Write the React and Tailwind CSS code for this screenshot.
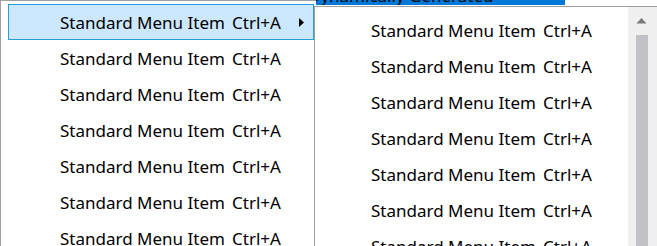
import React from 'react';

const ITEMS = Array.from({ length: 7 }, (_, i) => i);

function MenuRow({ highlighted, arrow }) {
  return (
    <div
      className={`flex h-[36px] w-[306px] items-center border pl-[51px] ${
        highlighted ? 'border-[#26a0da] bg-[#cce8ff]' : 'border-transparent'
      }`}
    >
      <span className="w-[172px] shrink-0 whitespace-nowrap">Standard Menu Item</span>
      <span className="w-[67px] shrink-0 whitespace-nowrap">Ctrl+A</span>
      {arrow && (
        <svg width="5" height="9" viewBox="0 0 5 9" className="mt-[1px]">
          <path d="M0 0 L5 4.5 L0 9 Z" fill="#000" />
        </svg>
      )}
    </div>
  );
}

export default function App() {
  return (
    <div className="relative h-[246px] w-[657px] overflow-hidden bg-white text-[17px] leading-none text-black font-['Noto_Sans',sans-serif]">
      {/* parent menu */}
      <div className="h-[260px] w-[316px] border-l border-t border-[#a0a0a0] pl-[7px] pt-[3px]">
        {ITEMS.map((i) => (
          <MenuRow key={i} highlighted={i === 0} arrow={i === 0} />
        ))}
      </div>

      {/* selected item of the control behind, clipped at the top */}
      <div className="absolute left-[316px] top-0 h-[5px] w-[249px] overflow-hidden bg-[#0078d7]">
        <span className="absolute left-[-8px] top-[-13px] whitespace-nowrap leading-[18px] text-[#0a0a0a]">
          Dynamically Generated
        </span>
      </div>

      {/* submenu popup */}
      <div className="absolute left-[314px] top-[6px] flex h-[250px] w-[344px] border border-[#a0a0a0] bg-white">
        <div className="flex-1 pt-[5px]">
          {ITEMS.map((i) => (
            <div key={i} className="flex h-[36px] items-center pl-[56px]">
              <span className="w-[172px] shrink-0 whitespace-nowrap">Standard Menu Item</span>
              <span className="whitespace-nowrap">Ctrl+A</span>
            </div>
          ))}
        </div>
        {/* scrollbar */}
        <div className="flex w-[29px] flex-col bg-[#f0f0f0] pl-[8px] pt-[11px]">
          <svg width="11" height="6" viewBox="0 0 11 6">
            <path d="M5.5 0 L11 6 L0 6 Z" fill="#7a7a7a" />
          </svg>
          <div className="mt-[11px] h-[240px] w-[12px] bg-[#c1c1c6]" />
        </div>
      </div>
    </div>
  );
}
